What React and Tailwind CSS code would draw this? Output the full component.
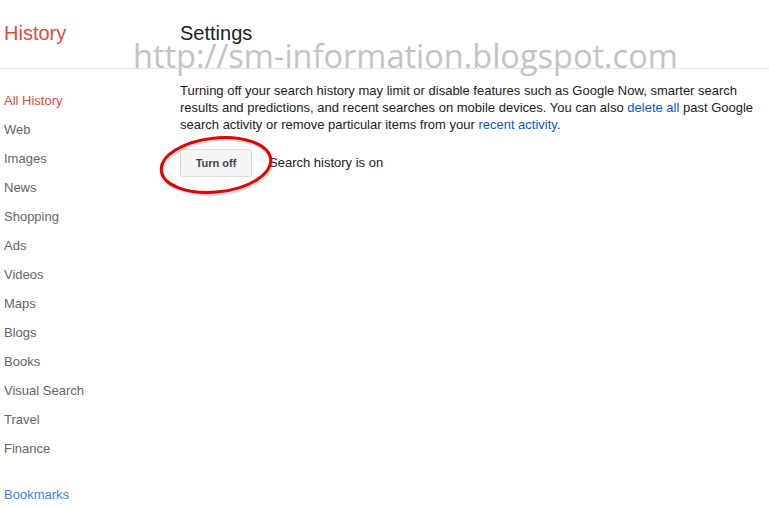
import React from "react";

const items = ["Web","Images","News","Shopping","Ads","Videos","Maps","Blogs","Books","Visual Search","Travel","Finance"];

export default function App() {
  return (
    <div className="relative w-[769px] h-[508px] bg-white overflow-hidden" style={{fontFamily:'"Liberation Sans", Arial, sans-serif'}}>
      <div className="flex h-[69px] border-b border-[#e5e5e5]">
        <div className="w-[180px] pl-[4px] pt-[20px] text-[20px] leading-[26px] text-[#dd4b39]">History</div>
        <div className="pt-[20px] text-[20px] leading-[26px] text-[#222]">Settings</div>
      </div>
      <div className="flex">
        <div className="w-[180px] pl-[4px] pt-[17px] flex flex-col text-[13px] text-[#666]">
          <div className="h-[29px] leading-[29px] text-[#dd4b39]">All History</div>
          {items.map((t) => (
            <div key={t} className="h-[29px] leading-[29px]">{t}</div>
          ))}
          <div className="h-[29px] leading-[29px] mt-[17px] text-[#427fed]">Bookmarks</div>
        </div>
        <div className="flex-1 pt-[13px] pr-[8px] text-[13px] text-[#222]">
          <p className="leading-[17px]">
            Turning off your search history may limit or disable features such as Google Now, smarter search results and predictions, and recent searches on mobile devices. You can also <span className="text-[#15c]">delete all</span> past Google search activity or remove particular items from your <span className="text-[#15c]">recent activity</span>.
          </p>
          <div className="mt-[16px] flex items-center gap-[17px]">
            <div className="relative">
              <button className="w-[72px] h-[28px] rounded-[2px] border border-[#dcdcdc] bg-[#f5f5f5] text-[11px] font-bold text-[#444]">Turn off</button>
              <svg className="absolute left-[-29px] top-[-19px]" width="130" height="70" viewBox="0 0 130 70">
                <ellipse cx="66" cy="37" rx="55" ry="27" fill="none" stroke="#888" strokeOpacity="0.3" strokeWidth="3" transform="rotate(-6 66 37)" />
                <ellipse cx="65" cy="35" rx="55" ry="27" fill="none" stroke="#e00000" strokeWidth="3" transform="rotate(-6 65 35)" />
              </svg>
            </div>
            <span>Search history is on</span>
          </div>
        </div>
      </div>
      <div className="absolute left-[133px] top-[37px] text-[32.5px] leading-[38px] text-[#c3c3c3] whitespace-nowrap" style={{fontFamily:'"Open Sans", sans-serif'}}>http://sm-information.blogspot.com</div>
    </div>
  );
}
